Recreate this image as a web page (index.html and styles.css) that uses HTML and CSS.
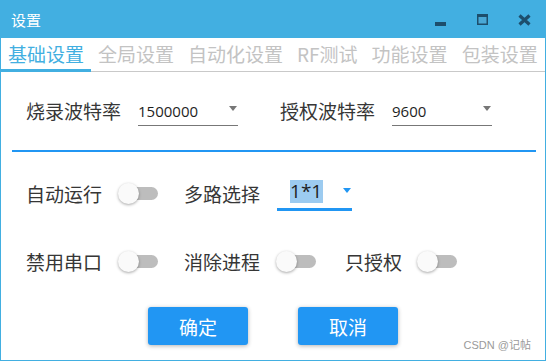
FILE: index.html
```html
<!DOCTYPE html>
<html lang="zh-CN">
<head>
    <meta charset="UTF-8">
    <title>设置</title>
    <link rel="stylesheet" href="styles.css">
</head>
<body>

<div class="window">
    <div class="titlebar">
        <span class="title">设置</span>
        <div class="controls">
            <span class="ctrl">
                <svg width="11" height="12" viewBox="0 0 11 12"><rect x="0" y="8" width="11" height="4" fill="#1d4e6c"/></svg>
            </span>
            <span class="ctrl">
                <svg width="11" height="11" viewBox="0 0 11 11"><rect x="0" y="0" width="11" height="11" fill="#1d4e6c"/><rect x="1.5" y="3" width="8" height="6.5" fill="#4aa8d6"/></svg>
            </span>
            <span class="ctrl">
                <svg width="13" height="12" viewBox="0 0 13 12"><path d="M1.5 1.5 L11.5 10.5 M11.5 1.5 L1.5 10.5" stroke="#1d4e6c" stroke-width="3.2"/></svg>
            </span>
        </div>
    </div>

    <div class="tabs">
        <div class="tab active">基础设置</div>
        <div class="tab">全局设置</div>
        <div class="tab">自动化设置</div>
        <div class="tab">RF测试</div>
        <div class="tab">功能设置</div>
        <div class="tab">包装设置</div>
    </div>

    <div class="content">
        <div class="row row-baud">
            <span class="label">烧录波特率</span>
            <div class="combo combo-baud">
                <span class="value">1500000</span>
                <span class="arrow"></span>
            </div>
            <span class="label label-far">授权波特率</span>
            <div class="combo combo-baud">
                <span class="value">9600</span>
                <span class="arrow"></span>
            </div>
        </div>

        <div class="divider"></div>

        <div class="row row-auto">
            <span class="label">自动运行</span>
            <span class="toggle"><span class="track"></span><span class="thumb"></span></span>
            <span class="label label-next">多路选择</span>
            <div class="combo combo-focus">
                <span class="value"><span class="selected">1*1</span></span>
                <span class="arrow"></span>
            </div>
        </div>

        <div class="row row-flags">
            <span class="label">禁用串口</span>
            <span class="toggle"><span class="track"></span><span class="thumb"></span></span>
            <span class="label label-next">消除进程</span>
            <span class="toggle"><span class="track"></span><span class="thumb"></span></span>
            <span class="label label-last">只授权</span>
            <span class="toggle"><span class="track"></span><span class="thumb"></span></span>
        </div>

        <div class="buttons">
            <button class="btn">确定</button>
            <button class="btn">取消</button>
        </div>
    </div>

    <div class="watermark">CSDN @记帖</div>
</div>

</body>
</html>
```

FILE: styles.css
```css
/* Общие стили */
body {
    margin: 0;
    padding: 0;
    background-color: #fff;
    font-family: "Open Sans", "Noto Sans CJK SC", sans-serif;
}

/* Окно */
.window {
    position: relative;
    width: 546px;
    height: 361px;
    box-sizing: border-box;
    border: 1px solid #42afe1;
    border-top: none;
    background-color: #fff;
    overflow: hidden;
}

/* Заголовок */
.titlebar {
    height: 38px;
    background-color: #42afe1;
    display: flex;
    align-items: center;
    padding-left: 11px;
    margin: 0 -1px;
}

.title {
    color: #fff;
    font-family: "Noto Sans CJK SC", sans-serif;
    font-size: 15px;
    flex: 1;
    margin-top: 1px;
}

.controls {
    display: flex;
    height: 38px;
    margin-right: 1px;
}

.ctrl {
    width: 42px;
    display: flex;
    align-items: center;
    justify-content: center;
    padding-top: 1px;
}

.ctrl svg {
    display: block;
}

/* Вкладки */
.tabs {
    display: flex;
    height: 34px;
    border-bottom: 1px solid #c9c9c9;
    box-sizing: border-box;
}

.tab {
    padding: 0 7px;
    font-family: "Noto Sans CJK SC", sans-serif;
    font-size: 19px;
    line-height: 31px;
    color: #c3c3c3;
    border-bottom: 3px solid transparent;
    margin-bottom: -1px;
}

.tab.active {
    color: #42afe1;
    border-bottom-color: #42afe1;
}

/* Содержимое */
.content {
    padding-left: 25px;
}

.row {
    display: flex;
    align-items: center;
    height: 36px;
}

.row-baud {
    margin-top: 20px;
}

.row-auto {
    margin-top: 23px;
}

.row-flags {
    margin-top: 32px;
}

.label {
    font-family: "Noto Sans CJK SC", sans-serif;
    font-size: 19px;
    color: #363636;
    margin-right: 17px;
}

.row-auto .label,
.row-flags .label {
    margin-right: 16px;
}

.label-far {
    margin-left: 42px;
}

.row-auto .label-next {
    margin-left: 26px;
    margin-right: 17px;
}

.row-flags .label-next {
    margin-left: 26px;
}

.row-flags .label-last {
    margin-left: 29px;
    margin-right: 15px;
}

/* Выпадающие списки */
.combo {
    position: relative;
    display: flex;
    align-items: center;
    box-sizing: border-box;
}

.combo-baud {
    width: 100px;
    height: 32px;
    border-bottom: 1px solid #777;
    padding-left: 0;
}

.combo-focus {
    width: 75px;
    height: 36px;
    border-bottom: 3px solid #2196f3;
    padding-left: 13px;
}

.value {
    flex: 1;
    font-size: 15px;
    color: #1e1e1e;
    margin-top: 2px;
}

.combo-focus .value {
    font-size: 19px;
    line-height: 23px;
    margin-top: 0;
}

.selected {
    background-color: #9ccbf0;
    display: inline-block;
    padding: 0 1px 0 0;
}

.arrow {
    width: 0;
    height: 0;
    border-left: 4.5px solid transparent;
    border-right: 4.5px solid transparent;
    border-top: 5px solid #777;
    margin-right: 1px;
    margin-bottom: 2px;
}

.combo-focus .arrow {
    border-top-color: #2196f3;
    margin-bottom: 3px;
}

.divider {
    height: 2px;
    background-color: #2196f3;
    margin: 22px 9px 0 -14px;
}

/* Переключатели */
.toggle {
    position: relative;
    display: inline-block;
    width: 40px;
    height: 21px;
}

.toggle .track {
    position: absolute;
    left: 3px;
    right: 0;
    top: 4px;
    height: 13px;
    border-radius: 7px;
    background-color: #bdbdbd;
}

.toggle .thumb {
    position: absolute;
    left: 0;
    top: 0;
    width: 21px;
    height: 21px;
    border-radius: 50%;
    background-color: #fafafa;
    box-shadow: 0 1px 3px rgba(0, 0, 0, 0.35);
}

/* Кнопки */
.buttons {
    display: flex;
    justify-content: center;
    gap: 50px;
    margin-top: 28px;
    margin-left: -25px;
}

.btn {
    width: 100px;
    height: 38px;
    border: none;
    border-radius: 3px;
    background-color: #2196f3;
    color: #fff;
    font-family: "Noto Sans CJK SC", sans-serif;
    font-size: 19px;
    box-shadow: 0 1px 4px rgba(0, 0, 0, 0.3);
    padding: 0;
}

.watermark {
    position: absolute;
    right: 14px;
    bottom: 8px;
    font-family: "Liberation Sans", "Noto Sans CJK SC", sans-serif;
    font-size: 11px;
    color: #9a9a9a;
}
```
